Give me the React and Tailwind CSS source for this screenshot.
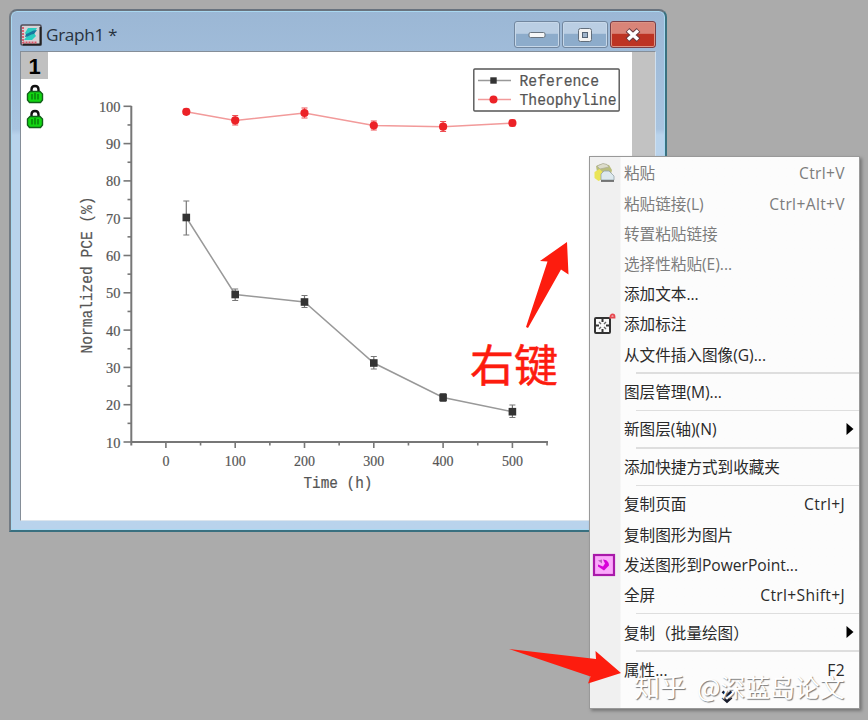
const MENU = [
  { label: '粘贴', keys: 'Ctrl+V', disabled: true, icon: 'paste' },
  { label: '粘贴链接(L)', keys: 'Ctrl+Alt+V', disabled: true },
  { label: '转置粘贴链接', disabled: true },
  { label: '选择性粘贴(E)...', disabled: true },
  { label: '添加文本...' },
  { label: '添加标注', icon: 'callout' },
  { label: '从文件插入图像(G)...' },
  { sep: true },
  { label: '图层管理(M)...' },
  { sep: true },
  { label: '新图层(轴)(N)', submenu: true },
  { sep: true },
  { label: '添加快捷方式到收藏夹' },
  { sep: true },
  { label: '复制页面', keys: 'Ctrl+J' },
  { label: '复制图形为图片' },
  { label: '发送图形到PowerPoint...', icon: 'ppt' },
  { label: '全屏', keys: 'Ctrl+Shift+J' },
  { sep: true },
  { label: '复制（批量绘图）', submenu: true },
  { sep: true },
  { label: '属性...', keys: 'F2' },
]

const REFERENCE = [
  { x: 186.3, y: 217.5, top: 201, bottom: 235 },
  { x: 235.2, y: 294.5, top: 289, bottom: 300.5 },
  { x: 304.5, y: 302, top: 295.5, bottom: 307.5 },
  { x: 373.8, y: 363, top: 356.5, bottom: 369 },
  { x: 443.1, y: 397.5, top: 393.5, bottom: 401.5 },
  { x: 512.4, y: 411.7, top: 405, bottom: 417.5 },
]

const THEOPHYLINE = [
  { x: 186.3, y: 111.8, top: 109, bottom: 114.5 },
  { x: 235.2, y: 120.4, top: 115.5, bottom: 125 },
  { x: 304.5, y: 113, top: 108, bottom: 118 },
  { x: 373.8, y: 125.5, top: 121, bottom: 130 },
  { x: 443.1, y: 126.7, top: 121.5, bottom: 131.5 },
  { x: 512.4, y: 123, top: 120, bottom: 126 },
]

const Y_LABELS = [100, 90, 80, 70, 60, 50, 40, 30, 20, 10]
const X_LABELS = [0, 100, 200, 300, 400, 500]

const yPos = (v) => 442 - (v - 10) * 3.73
const xPos = (v) => 165.9 + v * 0.693
const toPoints = (data) => data.map((p) => `${p.x},${p.y}`).join(' ')

function ErrorBar({ p, color }) {
  return (
    <path
      d={`M${p.x} ${p.top}V${p.bottom}M${p.x - 3} ${p.top}h6M${p.x - 3} ${p.bottom}h6`}
      stroke={color}
      strokeWidth="1.2"
      fill="none"
    />
  )
}

function Chart() {
  return (
    <svg viewBox="21 52 611 468" className="block h-[468px] w-[611px] bg-white font-['Liberation_Mono',monospace]">
      {/* Axes */}
      <g stroke="#777" strokeWidth="2" fill="none">
        <path d="M131.3 106V445.5M131.3 442H548" />
        {Y_LABELS.map((v) => (
          <path key={v} d={`M123.5 ${yPos(v)}h8`} strokeWidth="1.6" />
        ))}
        {Y_LABELS.slice(1).map((v) => (
          <path key={v} d={`M127.5 ${yPos(v + 5)}h4`} strokeWidth="1.6" />
        ))}
        {X_LABELS.map((v) => (
          <path key={v} d={`M${xPos(v)} 442v6`} strokeWidth="1.6" />
        ))}
        {X_LABELS.map((v) => (
          <path key={v} d={`M${xPos(v + 50)} 442v3.5`} strokeWidth="1.6" />
        ))}
      </g>

      <g className="font-['Liberation_Serif',serif]" fill="#555" stroke="#555" strokeWidth="0.2" fontSize="15">
        {Y_LABELS.map((v) => (
          <text key={v} x="120.5" y={yPos(v) + 5.5} textAnchor="end" textLength={String(v).length * 7.2} lengthAdjust="spacingAndGlyphs">{v}</text>
        ))}
        {X_LABELS.map((v) => (
          <text key={v} x={xPos(v)} y="466" textAnchor="middle" textLength={String(v).length * 7} lengthAdjust="spacingAndGlyphs">{v}</text>
        ))}
      </g>
      <g fill="#555" stroke="#555" strokeWidth="0.2" fontSize="16.5">
        <text x="303.5" y="488" textLength="69" lengthAdjust="spacingAndGlyphs">Time (h)</text>
        <text transform="translate(91.5 353.5) rotate(-90)" textLength="157" lengthAdjust="spacingAndGlyphs">Normalized PCE (%)</text>
      </g>

      {/* Series */}
      <polyline points={toPoints(REFERENCE)} fill="none" stroke="#999" strokeWidth="1.5" />
      {REFERENCE.map((p) => (
        <g key={p.x}>
          <ErrorBar p={p} color="#777" />
          <rect x={p.x - 3.8} y={p.y - 3.8} width="7.6" height="7.6" fill="#333" />
        </g>
      ))}
      <polyline points={toPoints(THEOPHYLINE)} fill="none" stroke="#f29a9a" strokeWidth="1.5" />
      {THEOPHYLINE.map((p) => (
        <g key={p.x}>
          <ErrorBar p={p} color="#ee5055" />
          <circle cx={p.x} cy={p.y} r="4.1" fill="#ec2227" />
        </g>
      ))}

      {/* Legend */}
      <rect x="473.8" y="69" width="145.4" height="42" rx="1" fill="#fff" stroke="#555" strokeWidth="1.4" />
      <path d="M478 80.5h33" stroke="#999" strokeWidth="1.3" />
      <rect x="490.3" y="77.3" width="6.4" height="6.4" fill="#333" />
      <path d="M478 99.5h33" stroke="#f29a9a" strokeWidth="1.5" />
      <circle cx="493.5" cy="99.5" r="4" fill="#ec2227" />
      <g fill="#555" stroke="#555" strokeWidth="0.2" fontSize="16.5">
        <text x="519.5" y="86.3" textLength="79.5" lengthAdjust="spacingAndGlyphs">Reference</text>
        <text x="519.5" y="105.3" textLength="97" lengthAdjust="spacingAndGlyphs">Theophyline</text>
      </g>
    </svg>
  )
}

function Lock() {
  return (
    <svg viewBox="0 0 18 20" className="h-5 w-[18px]">
      <path d="M5.500 8V5.500C5.500 3 7 2 9 2s3.500 1 3.500 3.500V8" fill="none" stroke="#111" strokeWidth="2.400" />
      <path d="M4 7.500h10l2.500 2.500v6L14.500 18.500h-11L1.500 16v-6z" fill="#12d612" stroke="#12601a" strokeWidth="1.400" />
      <path d="M6 10v5.500M9 9v6.500M12 10v5.500" stroke="#07750a" strokeWidth="1.300" />
    </svg>
  )
}

function GraphIcon() {
  return (
    <svg viewBox="0 0 22 22" className="h-[22px] w-[22px]">
      <rect x="1" y="1" width="20" height="20" rx="1.500" fill="#d5d2d6" stroke="#514d58" strokeWidth="1.600" />
      <path d="M20.500 3v17.500H3" stroke="#222" strokeWidth="2" fill="none" />
      <path d="M8 4h9l-3 5 2 3-4 4H4l3-4-2-3z" fill="#2accc0" />
      <path d="M6 10c4-1 6-4 11-4l-3 4c-4 0-5 3-9 3z" fill="#17769f" />
      <path d="M3 3v15.500h14" stroke="#dc5568" strokeWidth="1.800" strokeDasharray="2 1" fill="none" />
    </svg>
  )
}

function TitleButtons() {
  const blue = 'flex h-[27px] w-[46px] items-center justify-center rounded-[3px] border border-[#72879f] bg-linear-to-b from-[#bacee3] from-45% to-[#8daccb] to-50% shadow-[inset_0_0_0_1px_#c7d8e9]'
  return (
    <div className="flex gap-[2px]">
      <div className={blue}>
        <svg viewBox="0 0 20 8" className="h-2 w-5">
          <rect x="2" y="1.500" width="16" height="5" rx="1.500" fill="#f7f7f7" stroke="#69747f" strokeWidth="1" />
        </svg>
      </div>
      <div className={blue}>
        <svg viewBox="0 0 16 16" className="h-4 w-4">
          <rect x="1.500" y="1.500" width="13" height="13" rx="2" fill="#f2f2f2" stroke="#626e7b" />
          <rect x="5.500" y="5.500" width="5" height="5" fill="#9eb3ca" stroke="#536274" />
        </svg>
      </div>
      <div className="flex h-[27px] w-[46px] items-center justify-center rounded-[3px] border border-[#7a3f48] bg-linear-to-b from-[#d98478] from-45% to-[#bd3323] to-50% shadow-[inset_0_0_0_1px_#dc9485]">
        <svg viewBox="0 0 18 16" className="h-4 w-[18px]">
          <path d="M3.500 3l11 10M14.500 3l-11 10" stroke="#693a40" strokeWidth="5.500" />
          <path d="M4 3.500l10 9M14 3.500l-10 9" stroke="#fff" strokeWidth="3.500" />
        </svg>
      </div>
    </div>
  )
}

function GraphWindow() {
  return (
    <div className="absolute top-[9px] left-[9px] flex h-[523px] w-[658px] flex-col rounded-t-[8px] border-2 border-t-[#69737e] border-r-[#3a7180] border-b-[#397080] border-l-[#737b84] bg-linear-to-b from-[#9bb7d5] from-[0px] via-[#a9c4e0] via-[118px] to-[#b9d3ec] to-[124px] shadow-[inset_0_0_0_1px_#a9d8f1]">
      <div className="flex h-10 shrink-0 items-center justify-between pr-[9px] pl-[9px] pt-[7px]">
        <div className="flex items-center gap-1">
          <GraphIcon />
          <span className="font-['Open_Sans',sans-serif] text-[17.200px] leading-none font-medium tracking-[-0.350px] text-[#28323e]">Graph1 *</span>
        </div>
        <TitleButtons />
      </div>
      <div className="ml-[9px] flex h-[470px] w-[636px] border border-[#858e98] border-r-[#cfe0f0] border-b-[#dce5ed] bg-[#c2c2c2]">
        <div className="relative">
          <Chart />
          <div className="absolute top-0 left-0 flex w-[27px] flex-col items-center">
            <div className="flex h-[27px] w-full items-center justify-center bg-[#c0c0c0] pt-[2px] font-['Liberation_Sans',sans-serif] text-[22px] font-bold text-black">1</div>
            <div className="mt-[5px] flex flex-col gap-[5px]">
              <Lock />
              <Lock />
            </div>
          </div>
        </div>
      </div>
    </div>
  )
}

function MenuIcon({ name }) {
  if (name === 'paste') {
    return (
      <svg viewBox="0 0 24 22" className="h-[22px] w-6">
        <path d="M4 4l5-2 8 1 3 5-2 8H6z" fill="#b9bd7c" />
        <path d="M5 4l6-2.500 4 1L17 5 8 7z" fill="#dcdccb" stroke="#aeae98" strokeWidth="0.800" />
        <path d="M2.500 10l5-3 4 4-1 6-4 2-4-3z" fill="#eae456" />
        <path d="M9 12l3-3h5l5 5v4H9z" fill="#dde9ee" stroke="#94a3a8" strokeWidth="0.800" />
        <path d="M9 19h13" stroke="#555" strokeWidth="1.500" />
      </svg>
    )
  }
  if (name === 'callout') {
    return (
      <svg viewBox="0 0 24 24" className="h-6 w-6">
        <rect x="3" y="6" width="15" height="15" rx="1" fill="#fafafa" stroke="#333" strokeWidth="2" />
        <path d="M10.500 6v4M10.500 17v4M3 13.500h4M14 13.500h4" stroke="#333" strokeWidth="2" />
        <path d="M7 10l2 2M14 10l-2 2M7 17l2-2M14 17l-2-2" stroke="#666" strokeWidth="1.400" />
        <path d="M18.500 6.500V4.500a2 2 0 0 1 4 0v2M18.500 5.500h4" stroke="#e84850" strokeWidth="1.800" fill="none" />
      </svg>
    )
  }
  return (
    <svg viewBox="0 0 24 24" className="h-6 w-6">
      <rect x="2" y="2" width="20" height="20" fill="#fba9fb" stroke="#a91aaa" strokeWidth="2.200" />
      <path d="M11 6.500c4 0 6 3 6 6l-5 5-6-4v-2l5 2 2-3z" fill="#d800d8" />
      <path d="M6 7.500l4-1v4z" fill="#b864ba" />
    </svg>
  )
}

function MenuRow({ item }) {
  if (item.sep) {
    return (
      <div className="flex h-[7.300px] shrink-0 items-center pl-[46px]">
        <div className="h-[1.500px] w-full bg-[#dedede]" />
      </div>
    )
  }
  return (
    <div className={`flex h-[30.200px] shrink-0 items-center text-[15.600px] whitespace-nowrap ${item.disabled ? 'text-[#7c7c7c]' : 'text-[#2a2a2a]'}`}>
      <div className="flex w-[30px] shrink-0 justify-center pr-[2px]">{item.icon && <MenuIcon name={item.icon} />}</div>
      <span className="flex-1 pt-[2px] pl-[4px]">{item.label}</span>
      {item.keys && <span className="pt-[2px] pr-[14px] tracking-[0.350px]">{item.keys}</span>}
      {item.submenu && (
        <svg viewBox="0 0 8 12" className="mr-[5px] h-3 w-2">
          <path d="M0.500 0l7 6-7 6z" fill="#000" />
        </svg>
      )}
    </div>
  )
}

function ContextMenu() {
  return (
    <div className="absolute top-[156px] left-[589px] flex h-[553px] w-[271px] flex-col border border-[#999] bg-linear-to-r from-[#f0f0f0] from-[30px] to-[#fcfcfc] to-[31px] pt-px font-['Open_Sans','Noto_Sans_CJK_SC',sans-serif] shadow-[2px_2px_3px_#777]">
      {MENU.map((item, i) => (
        <MenuRow key={i} item={item} />
      ))}
      <div className="flex justify-center pt-[5px] pl-[5px]">
        <svg viewBox="0 0 12 14" className="h-[14px] w-3">
          <path d="M1.500 1.500l4.500 4 4.500-4M1.500 7.500l4.500 4 4.500-4" fill="none" stroke="#171b2a" strokeWidth="2.500" />
        </svg>
      </div>
    </div>
  )
}

function Annotations() {
  return (
    <>
      <svg viewBox="0 0 868 720" className="absolute inset-0 h-[720px] w-[868px]">
        <path d="M567 242L540 261l7.500.5L526 327l2 1 33-58.500 7.500 5z" fill="#fd1c0e" />
        <path d="M509 649l87 10-.5-8L621 673l-33 10.500 2.500-7z" fill="#fd1c0e" />
      </svg>
      <div className="absolute top-[341px] left-[470px] font-['Noto_Sans_CJK_SC',sans-serif] text-[44px] leading-[44px] whitespace-nowrap text-[#fd1c0e] [-webkit-text-stroke:0.5px_#fd1c0e]">右键</div>
      <div className="absolute top-[672px] left-[634px] flex gap-[11px] font-['Noto_Sans_CJK_SC',sans-serif] leading-[28px] whitespace-nowrap text-white [text-shadow:1px_1px_1px_#777]">
        <span className="text-[26px]">知乎</span>
        <span className="text-[24.800px]">@深蓝岛论文</span>
      </div>
    </>
  )
}

export default function App() {
  return (
    <div className="relative h-[720px] w-[868px] overflow-hidden bg-[#ababab]">
      <GraphWindow />
      <ContextMenu />
      <Annotations />
    </div>
  )
}
